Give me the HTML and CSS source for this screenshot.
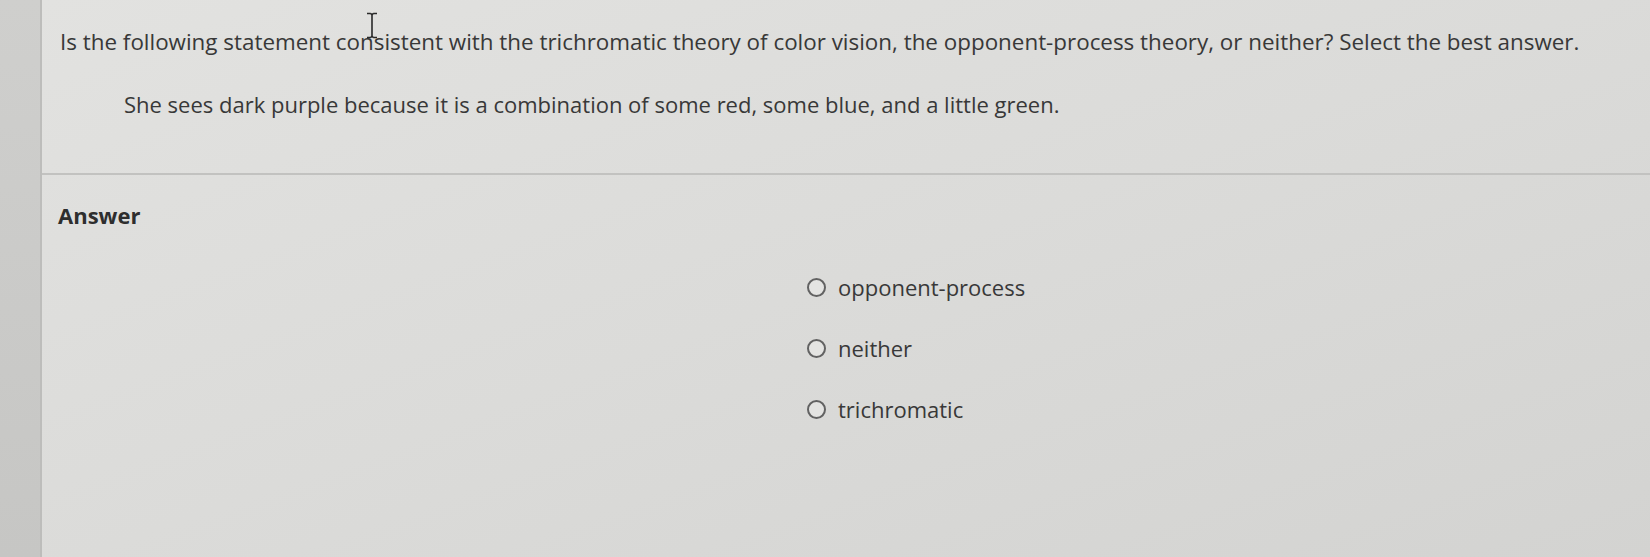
FILE: index.html
```html
<!DOCTYPE html>
<html>
<head>
<meta charset="utf-8">
<link rel="stylesheet" href="styles.css">
</head>
<body>
<div class="screen">
  <div class="gutter"></div>
  <div class="panel">
    <section class="question">
      <p class="prompt">Is the following statement consistent with the trichromatic theory of color vision, the opponent-process theory, or neither? Select the best answer.</p>
      <p class="statement">She sees dark purple because it is a combination of some red, some blue, and a little green.</p>
      <svg class="cursor" width="12" height="27" viewBox="0 0 12 27"><path d="M1 1.5h3.5M7.5 1.5H11M6 2v23M1 25.5h3.5M7.5 25.5H11M4.5 1.5Q6 2 6 3.5Q6 2 7.5 1.5M4.5 25.5Q6 25 6 23.5Q6 25 7.5 25.5" fill="none" stroke="#2a2a2a" stroke-width="1.6"/></svg>
    </section>
    <section class="answer">
      <h2 class="answer-label">Answer</h2>
      <ul class="options">
        <li class="option"><span class="radio"></span>opponent-process</li>
        <li class="option"><span class="radio"></span>neither</li>
        <li class="option"><span class="radio"></span>trichromatic</li>
      </ul>
    </section>
  </div>
</div>
</body>
</html>
```
FILE: styles.css
```css
html, body {
  margin: 0;
  padding: 0;
}
body {
  width: 1650px;
  height: 557px;
  overflow: hidden;
  font-family: "Open Sans", "Liberation Sans", sans-serif;
  color: #383838;
  background: #d6d6d4;
}
.screen {
  display: flex;
  height: 557px;
}
.gutter {
  width: 40px;
  flex: none;
  background: linear-gradient(180deg, #cfcfcd 0%, #c6c6c4 100%);
  border-right: 2px solid #bdbdbb;
}
.panel {
  flex: 1;
  background: linear-gradient(160deg, #e2e2e0 0%, #dbdbd9 50%, #d3d3d1 100%);
}
.question {
  position: relative;
  padding: 27px 0 0 18px;
  height: 146px;
  border-bottom: 2px solid #c2c2c0;
}
.prompt {
  margin: 0;
  font-size: 22.4px;
  line-height: 30px;
}
.statement {
  margin: 32px 0 0 64px;
  font-size: 22px;
  line-height: 30px;
}
.cursor {
  position: absolute;
  left: 324px;
  top: 12px;
}
.answer {
  padding: 25px 0 0 16px;
}
.answer-label {
  margin: 0;
  font-size: 22px;
  font-weight: 700;
  color: #2e2e2e;
  line-height: 30px;
}
.options {
  list-style: none;
  margin: 42px 0 0 0;
  padding: 0 0 0 749px;
}
.option {
  display: flex;
  align-items: center;
  gap: 12px;
  font-size: 22px;
  line-height: 30px;
  height: 30px;
  margin-bottom: 31px;
}
.radio {
  width: 19px;
  height: 19px;
  border: 2px solid #626262;
  border-radius: 50%;
  box-sizing: border-box;
  background: #e4e4e2;
}
```
